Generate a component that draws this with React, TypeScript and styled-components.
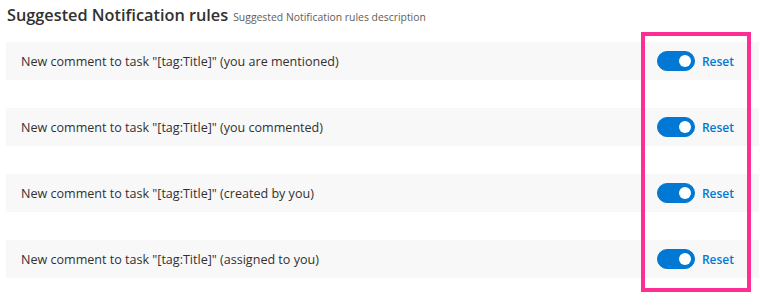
import React from "react";
import styled, { createGlobalStyle } from "styled-components";

const rules = [
  'New comment to task "[tag:Title]" (you are mentioned)',
  'New comment to task "[tag:Title]" (you commented)',
  'New comment to task "[tag:Title]" (created by you)',
  'New comment to task "[tag:Title]" (assigned to you)',
];

function App() {
  return (
    <Page>
      <GlobalStyle />
      <Header>
        <Title>Suggested Notification rules</Title>
        <Description>Suggested Notification rules description</Description>
      </Header>
      <List>
        {rules.map((rule) => (
          <Row key={rule}>
            <RuleText>{rule}</RuleText>
            <Actions>
              <Toggle $on>
                <Knob />
              </Toggle>
              <ResetLink>Reset</ResetLink>
            </Actions>
          </Row>
        ))}
        <Highlight />
      </List>
    </Page>
  );
}

export default App;

const GlobalStyle = createGlobalStyle`
  body {
    margin: 0;
    background: #fff;
    font-family: "Open Sans", "Noto Sans", sans-serif;
  }
`;
const Page = styled.div`
  width: 768px;
  height: 303px;
  padding: 4px 9px 0 6px;
  box-sizing: border-box;
`;
const Header = styled.div`
  display: flex;
  align-items: baseline;
  gap: 5px;
  padding-left: 1px;
  height: 38px;
`;
const Title = styled.h2`
  margin: 0;
  font-size: 16.3px;
  font-weight: 600;
  color: #323130;
`;
const Description = styled.span`
  font-size: 10.4px;
  color: #605e5c;
`;
const List = styled.div`
  position: relative;
  display: flex;
  flex-direction: column;
  gap: 28px;
`;
const Row = styled.div`
  height: 38px;
  background: #f8f8f8;
  display: flex;
  align-items: center;
  justify-content: space-between;
  padding: 0 25px 0 15px;
`;
const RuleText = styled.span`
  font-size: 12.55px;
  color: #323130;
`;
const Actions = styled.div`
  display: flex;
  align-items: center;
  gap: 7px;
`;
const Toggle = styled.div<{ $on?: boolean }>`
  width: 38px;
  height: 20px;
  border-radius: 10px;
  box-sizing: border-box;
  background: ${(p) => (p.$on ? "#0078d4" : "#fff")};
  border: 1px solid ${(p) => (p.$on ? "#0078d4" : "#605e5c")};
  display: flex;
  align-items: center;
  justify-content: ${(p) => (p.$on ? "flex-end" : "flex-start")};
  padding: 0 3px;
`;
const Knob = styled.span`
  width: 12px;
  height: 12px;
  border-radius: 50%;
  background: #fff;
`;
const ResetLink = styled.span`
  font-size: 12px;
  font-weight: 600;
  color: #0078d4;
  cursor: pointer;
`;
const Highlight = styled.div`
  position: absolute;
  top: -10px;
  left: 635px;
  width: 110px;
  height: 260px;
  box-sizing: border-box;
  border: 4px solid #ff2e93;
  pointer-events: none;
`;
